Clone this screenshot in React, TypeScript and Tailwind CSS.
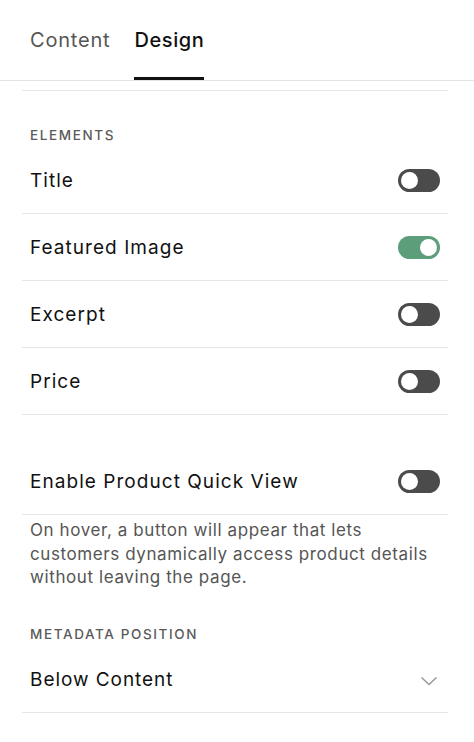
import React from "react";

function Toggle({ on }: { on: boolean }) {
  return (
    <div
      className={
        "relative w-[42px] h-[23px] rounded-full shrink-0 " +
        (on ? "bg-[#5c9e7a]" : "bg-[#4b4b4b]")
      }
    >
      <div
        className={
          "absolute top-[3px] w-[17px] h-[17px] rounded-full bg-white " +
          (on ? "right-[3px]" : "left-[3px]")
        }
      />
    </div>
  );
}

function Row({ label, on }: { label: string; on: boolean }) {
  return (
    <div className="h-[67px] flex items-center justify-between px-2 border-b border-[#e6e6e6]">
      <span className="pt-[3px] text-[19px] tracking-[0.055em] text-[#111]">{label}</span>
      <Toggle on={on} />
    </div>
  );
}

export default function App() {
  return (
    <div
      className="w-[474px] h-[742px] bg-white overflow-hidden"
      style={{ fontFamily: "Inter, 'Liberation Sans', sans-serif" }}
    >
      <div className="h-[81px] flex items-end gap-[24px] px-[30px] border-b border-[#e3e3e3]">
        <div className="h-full flex items-center pb-[1px] text-[20px] tracking-[0.04em] text-[#555]">
          Content
        </div>
        <div className="h-full flex flex-col">
          <div className="flex-1 flex items-center pt-[2px] text-[20px] tracking-[0.03em] text-[#111] font-medium">
            Design
          </div>
          <div className="h-[3px] bg-[#111]" />
        </div>
      </div>
      <div className="px-[22px] pr-[26px]">
        <div className="mt-[9px] border-t border-[#e6e6e6]" />
        <div className="mt-[36px] mb-[4px] px-2 text-[13.5px] leading-[16px] tracking-[0.12em] font-medium text-[#5a5a5a]">
          ELEMENTS
        </div>
        <Row label="Title" on={false} />
        <Row label="Featured Image" on={true} />
        <Row label="Excerpt" on={false} />
        <Row label="Price" on={false} />
        <div className="mt-[33px]">
          <Row label="Enable Product Quick View" on={false} />
        </div>
        <p className="px-2 pt-[4px] text-[17px] leading-[23.5px] tracking-[0.035em] text-[#555]">
          On hover, a button will appear that lets customers dynamically access
          product details without leaving the page.
        </p>
        <div className="mt-[36px] mb-[4px] px-2 text-[13.5px] leading-[16px] tracking-[0.12em] font-medium text-[#5a5a5a]">
          METADATA POSITION
        </div>
        <div className="h-[67px] flex items-center justify-between px-2 pt-[4px] border-b border-[#e6e6e6]">
          <span className="text-[19px] tracking-[0.05em] text-[#111]">Below Content</span>
          <svg width="18" height="10" viewBox="0 0 18 10" className="mr-[2px]">
            <path d="M1.5 1.5 L9 8.5 L16.5 1.5" fill="none" stroke="#9a9a9a" strokeWidth="1.6" />
          </svg>
        </div>
      </div>
    </div>
  );
}
